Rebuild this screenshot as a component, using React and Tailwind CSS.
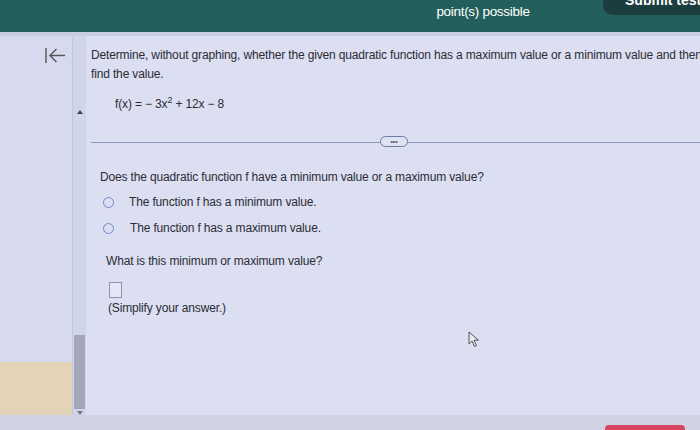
import React from "react";

export default function App() {
  const font = { fontFamily: '"Liberation Sans", Arial, sans-serif' };
  return (
    <div className="w-[700px] h-[430px] overflow-hidden flex flex-col bg-[#dcdff1] text-[#2b2c35]" style={font}>
      {/* header */}
      <div className="h-[32px] shrink-0 bg-[#235f5c] flex items-start relative">
        <div className="flex-1" />
        <div className="w-[200px] pt-[2px] text-[13.5px] tracking-[-0.3px] text-white text-center">point(s) possible</div>
        <div className="w-[20px]" />
        <div className="w-[97px] h-[15px] bg-[#1c3d3d] rounded-bl-[10px] flex items-start pl-[22px] overflow-hidden whitespace-nowrap">
          <span className="text-white font-bold text-[14px] leading-none -mt-[7px]">Submit test</span>
        </div>
      </div>
      <div className="h-[4px] bg-[#c8cde3] shrink-0" />
      {/* body */}
      <div className="flex-1 flex min-h-0">
        {/* left column */}
        <div className="w-[72px] shrink-0 flex flex-col bg-[#d7daee]">
          <div className="h-[30px] flex items-center justify-center pl-[38px] pt-[8px]">
            <svg width="22" height="17" viewBox="0 0 22 17" fill="none" stroke="#555" strokeWidth="1.4">
              <path d="M2 1 V16" />
              <path d="M21 8.5 H6" />
              <path d="M12.5 2 L6 8.5 L12.5 15" />
            </svg>
          </div>
          <div className="flex-1" />
          <div className="h-[53px] bg-[#e3d4b7] mb-[15px]" />
        </div>
        {/* scrollbar */}
        <div className="w-[14px] shrink-0 flex flex-col items-center bg-[#d1d5e9] border-l border-[#c4c8dc] pb-[15px]">
          <div className="h-[74px]" />
          <div className="w-0 h-0 border-l-[3px] border-r-[3px] border-b-[4px] border-l-transparent border-r-transparent border-b-[#444]" />
          <div className="flex-1" />
          <div className="w-[11px] h-[74px] bg-[#a3a6b8]" />
          <div className="mt-[2px] w-0 h-0 border-l-[3px] border-r-[3px] border-t-[4px] border-l-transparent border-r-transparent border-t-[#777]" />
        </div>
        {/* main */}
        <div className="flex-1 flex flex-col min-w-0 pb-[14px]">
          <div className="flex-1 pl-[5px] pt-[10px] text-[12px] tracking-[-0.15px] leading-[19px] whitespace-nowrap overflow-hidden">
            <div>Determine, without graphing, whether the given quadratic function has a maximum value or a minimum value and then</div>
            <div>find the value.</div>
            <div className="pl-[24px] pt-[11px]">
              f(x) = &minus; 3x<sup className="text-[9px] relative -top-[5px]">2</sup> + 12x &minus; 8
            </div>
            <div className="mt-[22px] relative h-[12px] flex items-center">
              <div className="h-px w-full bg-[#8e97b8]" />
              <div className="absolute left-[289px] top-0 w-[28px] h-[11px] rounded-full border border-[#6f7aa3] bg-[#dfe3f4] flex items-center justify-center text-[7px] leading-none text-[#555]">•••</div>
            </div>
            <div className="pl-[9px] pt-[20px]">Does the quadratic function f have a minimum value or a maximum value?</div>
            <div className="pl-[12px] pt-[6px] flex items-center gap-[15px]">
              <span className="w-[11px] h-[11px] rounded-full border-[1.5px] border-[#6d8cc4] inline-block" />
              <span>The function f has a minimum value.</span>
            </div>
            <div className="pl-[12px] pt-[7px] flex items-center gap-[16px]">
              <span className="w-[11px] h-[11px] rounded-full border-[1.5px] border-[#6d8cc4] inline-block" />
              <span>The function f has a maximum value.</span>
            </div>
            <div className="pl-[15px] pt-[14px]">What is this minimum or maximum value?</div>
            <div className="pl-[18px] pt-[11px]">
              <div className="w-[13px] h-[16px] border border-[#8f95ad] bg-[#e4e6f5]" />
            </div>
            <div className="pl-[17px] pt-[1px]">(Simplify your answer.)</div>
            <div className="pl-[377px] pt-[13px]">
              <svg width="12" height="17" viewBox="0 0 12 17" fill="#e6e8f5" stroke="#555" strokeWidth="1">
                <path d="M1 1 L1 13 L4 10 L6.5 15.5 L8.5 14.6 L6 9.2 L10.5 9.2 Z" />
              </svg>
            </div>
          </div>
        </div>
      </div>
      {/* bottom strip */}
      <div className="h-[15px] shrink-0 bg-[#d0d3e4] flex items-end justify-end pr-[15px] -mt-[15px] relative">
        <div className="w-[80px] h-[5px] bg-[#d94560] rounded-t-[4px]" />
      </div>
    </div>
  );
}
